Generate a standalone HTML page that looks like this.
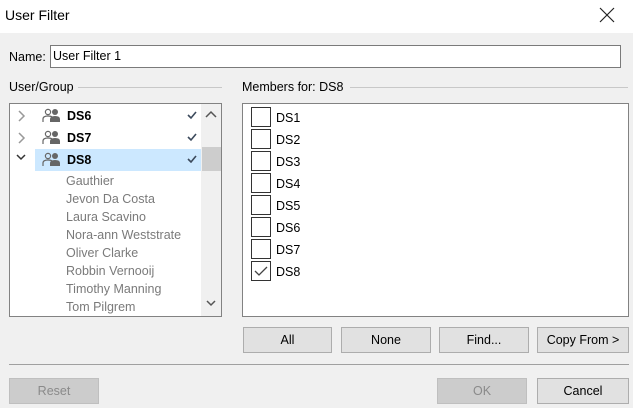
<!DOCTYPE html>
<html><head><style>
*{margin:0;padding:0;box-sizing:border-box}
body{width:633px;height:408px;background:#f0f0f0;font-family:"Liberation Sans",sans-serif;font-size:12.5px;color:#000;position:relative;overflow:hidden}
.a{position:absolute;white-space:nowrap}
.btn{position:absolute;height:26px;background:#e1e1e1;border:1px solid #adadad;text-align:center;line-height:24px}
.dis{color:#8a8a8a;background:#cccccc;border-color:#bfbfbf}
.cb{position:absolute;left:251px;width:20px;height:20px;border:1px solid #333;background:#fff}
.g{color:#7a7a7a}
b{font-weight:bold}
</style></head><body>
<div class="a" style="left:0;top:0;width:633px;height:33px;background:#fff"></div>
<div class="a" style="left:5px;top:7px;font-size:14px">User Filter</div>
<svg class="a" style="left:599px;top:7px" width="16" height="16"><path d="M1 1L15 15M15 1L1 15" stroke="#222" stroke-width="1.2"/></svg>
<div class="a" style="left:9px;top:50px">Name:</div>
<div class="a" style="left:50px;top:45px;width:571px;height:23px;background:#fff;border:1px solid #7a7a7a;padding:3px 2px">User Filter 1</div>
<div class="a" style="left:9px;top:80px">User/Group</div>
<div class="a" style="left:78px;top:87px;width:144px;height:1px;background:#c8c8c8"></div>
<div class="a" style="left:242px;top:80px">Members for: DS8</div>
<div class="a" style="left:350px;top:87px;width:278px;height:1px;background:#c8c8c8"></div>
<div class="a" style="left:9px;top:103px;width:213px;height:214px;background:#fff;border:1px solid #828282"></div>
<div class="a" style="left:201px;top:104px;width:20px;height:212px;background:#f0f0f0"></div>
<div class="a" style="left:202px;top:147px;width:19px;height:24px;background:#cdcdcd"></div>
<svg class="a" style="left:205px;top:110px" width="12" height="8"><path d="M1 7L6 2L11 7" stroke="#555" stroke-width="1.5" fill="none"/></svg>
<svg class="a" style="left:205px;top:299px" width="12" height="8"><path d="M2 2L6 6L10 2" stroke="#555" stroke-width="1.5" fill="none"/></svg>
<div class="a" style="left:35px;top:149px;width:166px;height:22px;background:#cce8ff"></div>
<svg class="a" style="left:16px;top:109px" width="10" height="60">
<path d="M3 2L8 7L3 12" stroke="#999" stroke-width="1.5" fill="none"/>
<path d="M3 24L8 29L3 34" stroke="#999" stroke-width="1.5" fill="none"/>
<path d="M1 46L5 50L9 46" stroke="#333" stroke-width="1.5" fill="none"/></svg>
<svg class="a" style="left:42px;top:108px" width="20" height="60">
<g id="u"><circle cx="6" cy="4" r="2.6" fill="none" stroke="#666" stroke-width="1.2"/><path d="M1 14V11Q1 8 6 8Q9 8 10 9" fill="none" stroke="#666" stroke-width="1.2"/><circle cx="13" cy="4" r="3" fill="#666"/><path d="M8 14V11Q8 8 13 8Q18 8 18 11V14Z" fill="#666"/></g>
<use href="#u" y="22"/><use href="#u" y="44"/></svg>
<div class="a" style="left:67px;top:109px"><b>DS6</b></div>
<div class="a" style="left:67px;top:131px"><b>DS7</b></div>
<div class="a" style="left:67px;top:153px"><b>DS8</b></div>
<svg class="a" style="left:187px;top:111px" width="10" height="52"><g stroke="#3c4a5c" stroke-width="1.6" fill="none"><path d="M1 4L4 7L9 1"/><path d="M1 26L4 29L9 23"/><path d="M1 48L4 51L9 45"/></g></svg>
<div class="a g" style="left:66px;top:172px;line-height:18px">Gauthier<br>Jevon Da Costa<br>Laura Scavino<br>Nora-ann Weststrate<br>Oliver Clarke<br>Robbin Vernooij<br>Timothy Manning<br>Tom Pilgrem</div>
<div class="a" style="left:242px;top:103px;width:387px;height:214px;background:#fff;border:1px solid #828282"></div>
<div class="cb" style="top:107px"></div><div class="cb" style="top:129px"></div><div class="cb" style="top:151px"></div><div class="cb" style="top:173px"></div><div class="cb" style="top:195px"></div><div class="cb" style="top:217px"></div><div class="cb" style="top:239px"></div><div class="cb" style="top:261px"></div>
<svg class="a" style="left:254px;top:265px" width="14" height="12"><path d="M1 6L5 10L13 2" stroke="#444" stroke-width="1.3" fill="none"/></svg>
<div class="a" style="left:276px;top:107px;line-height:22px">DS1<br>DS2<br>DS3<br>DS4<br>DS5<br>DS6<br>DS7<br>DS8</div>
<div class="btn" style="left:243px;top:327px;width:89px">All</div>
<div class="btn" style="left:341px;top:327px;width:90px">None</div>
<div class="btn" style="left:439px;top:327px;width:90px">Find...</div>
<div class="btn" style="left:537px;top:327px;width:92px">Copy From &gt;</div>
<div class="a" style="left:9px;top:364px;width:620px;height:1px;background:#a0a0a0"></div>
<div class="btn dis" style="left:9px;top:378px;width:90px">Reset</div>
<div class="btn dis" style="left:437px;top:378px;width:90px">OK</div>
<div class="btn" style="left:537px;top:378px;width:92px">Cancel</div>
</body></html>
